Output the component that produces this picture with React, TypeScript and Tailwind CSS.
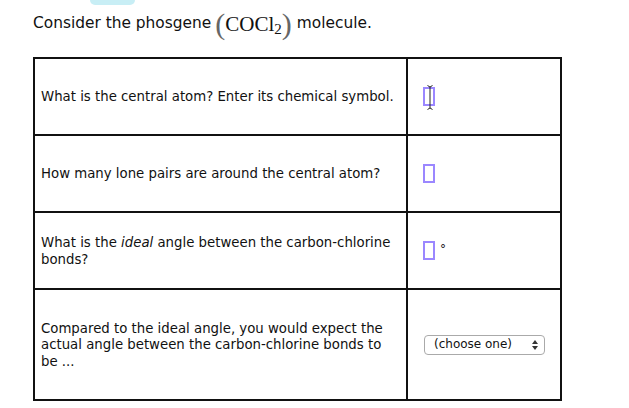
import React from 'react';

const font = { fontFamily: '"DejaVu Sans", Verdana, sans-serif' };

const AnswerBox: React.FC<{ cursor?: boolean }> = ({ cursor }) => (
  <span className="relative inline-block h-[19px] w-[12px] border-2 border-[#9b87ff] align-middle">
    {cursor && (
      <svg className="absolute left-[2px] top-[-4px]" width="6" height="25" viewBox="0 0 6 25">
        <path d="M0.5 0.5 L3 2 L5.5 0.5 M3 2 V23 M0.5 24.5 L3 23 L5.5 24.5" stroke="#222" strokeWidth="1" fill="none" />
      </svg>
    )}
  </span>
);

const App: React.FC = () => {
  return (
    <div className="relative h-[408px] w-[629px] bg-white text-[#111]" style={font}>
      <div className="absolute left-[90px] top-0 h-[5px] w-[45px] rounded-b-full bg-[#c8eef5]" />

      <div className="flex h-[40px] items-center pl-[33px] pt-[8px] text-[15.4px]">
        <span>Consider the phosgene</span>
        <span className="ml-[4px] flex items-center" style={{ fontFamily: '"Liberation Serif", serif' }}>
          <span className="text-[30px] font-light leading-none text-[#666]">(</span>
          <span className="text-[21px] leading-none">
            COCl<sub className="text-[15px]">2</sub>
          </span>
          <span className="text-[30px] font-light leading-none text-[#666]">)</span>
        </span>
        <span className="ml-[5px]">molecule.</span>
      </div>

      <table className="ml-[33px] mt-[17px] w-[529px] border-collapse border-2 border-[#111] text-[13.3px] leading-[16.5px]">
        <tbody>
          <tr className="h-[77px]">
            <td className="w-[373px] border-2 border-[#111] px-[6px] pt-[2px]">What is the central atom? Enter its chemical symbol.</td>
            <td className="border-2 border-[#111] pl-[15px]">
              <AnswerBox cursor />
            </td>
          </tr>
          <tr className="h-[77px]">
            <td className="border-2 border-[#111] px-[6px] pt-[2px]">How many lone pairs are around the central atom?</td>
            <td className="border-2 border-[#111] pl-[15px]">
              <AnswerBox />
            </td>
          </tr>
          <tr className="h-[77px]">
            <td className="border-2 border-[#111] px-[6px] pt-[2px]">
              What is the <i>ideal</i> angle between the carbon-chlorine bonds?
            </td>
            <td className="border-2 border-[#111] pl-[15px]">
              <AnswerBox />
              <span className="ml-[5px] align-top text-[12px]">°</span>
            </td>
          </tr>
          <tr className="h-[111px]">
            <td className="border-2 border-[#111] px-[6px] pt-[2px]">
              Compared to the ideal angle, you would expect the actual angle between the carbon-chlorine bonds to be ...
            </td>
            <td className="border-2 border-[#111] pl-[16px]">
              <div className="flex h-[20px] w-[121px] items-center justify-between rounded-[4px] border border-[#aaa] bg-white pl-[9px] pr-[6px] text-[12px]">
                <span>(choose one)</span>
                <svg width="6" height="10" viewBox="0 0 6 10">
                  <path d="M3 0 L6 4 H0 Z M3 10 L6 6 H0 Z" fill="#333" />
                </svg>
              </div>
            </td>
          </tr>
        </tbody>
      </table>
    </div>
  );
};

export default App;
